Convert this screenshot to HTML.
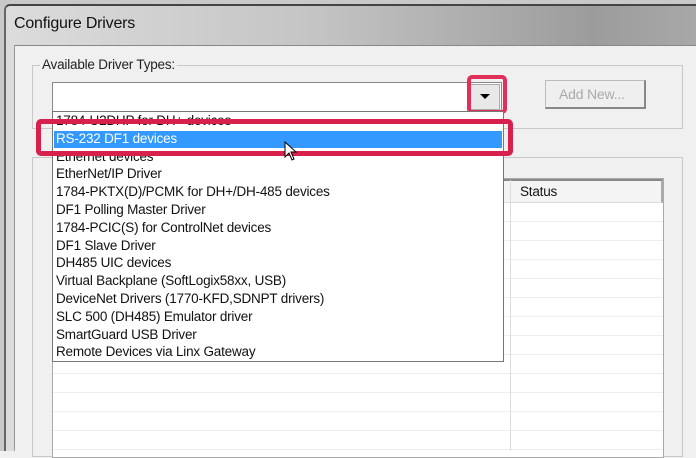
<!DOCTYPE html>
<html><head><style>
body{margin:0;width:696px;height:451px;overflow:hidden;background:#f0f0f0;font-family:"Liberation Sans",sans-serif;position:relative}
div{position:absolute;box-sizing:border-box}
.t{font-size:13.5px;color:#111;white-space:nowrap;letter-spacing:-0.2px}
</style></head><body>
<div style="left:0;top:0;width:696px;height:451px;background:#c9c9c9"></div>
<div style="left:4px;top:4px;width:692px;height:447px;background:linear-gradient(90deg,#dcdcdc,#c4c4c4 45%,#9c9c9c 85%,#a8a8a8);border-top:2px solid #444;border-left:2px solid #666;border-radius:6px 0 0 0"></div>
<div class="t" style="left:14px;top:15px;font-size:16px;color:#111">Configure Drivers</div>
<div style="left:14px;top:45px;width:682px;height:406px;background:#f0f0f0;border-top:1px solid #888;border-left:1px solid #999"></div>
<!-- group 1 -->
<div style="left:32px;top:65px;width:651px;height:64px;border:1px solid #c8c8c8"></div>
<div class="t" style="left:40px;top:57px;background:#f0f0f0;padding:0 2px;color:#222">Available Driver Types:</div>
<div style="left:52px;top:82px;width:450px;height:30px;background:#fff;border:1px solid #888;border-bottom:none"></div>
<div style="left:470px;top:84px;width:30px;height:26px;background:#e8e8e8;border:1px solid #aaa"></div>
<div style="left:480px;top:94px;width:0;height:0;border-left:5px solid transparent;border-right:5px solid transparent;border-top:5px solid #000"></div>
<div style="left:467px;top:75px;width:40px;height:39px;border:4px solid #e0305a;border-radius:5px"></div>
<div style="left:545px;top:80px;width:101px;height:29px;background:#efefef;border:1px solid #bbb;border-right:2px solid #888;border-bottom:2px solid #888"></div>
<div class="t" style="left:559px;top:86px;color:#aaa;font-size:14px">Add New...</div>
<!-- group 2 -->
<div style="left:32px;top:157px;width:651px;height:300px;border:1px solid #c8c8c8"></div>
<div style="left:52px;top:178px;width:612px;height:280px;background:#fff;border:1px solid #aaa;background-image:repeating-linear-gradient(180deg,#fff 0 18px,#eee 18px 19px);background-position:0 24px"></div>
<div style="left:53px;top:179px;width:610px;height:24px;background:#f4f4f4;border-top:2px solid #888;border-bottom:1px solid #ddd;border-right:2px solid #aaa"></div>
<div style="left:510px;top:180px;width:1px;height:271px;background:#ddd"></div>
<div class="t" style="left:520px;top:184px">Status</div>
<!-- dropdown list -->
<div style="left:52px;top:111px;width:452px;height:251px;background:#fff;border:1px solid #777"></div>
<div style="left:54px;top:131px;width:448px;height:17px;background:#3399ff"></div>
<div class="t" style="left:56px;top:112px;line-height:17.8px">
1784-U2DHP for DH+ devices<br><span style="color:#fff">RS-232 DF1 devices</span><br>Ethernet devices<br>EtherNet/IP Driver<br>1784-PKTX(D)/PCMK for DH+/DH-485 devices<br>DF1 Polling Master Driver<br>1784-PCIC(S) for ControlNet devices<br>DF1 Slave Driver<br>DH485 UIC devices<br>Virtual Backplane (SoftLogix58xx, USB)<br>DeviceNet Drivers (1770-KFD,SDNPT drivers)<br>SLC 500 (DH485) Emulator driver<br>SmartGuard USB Driver<br>Remote Devices via Linx Gateway</div>
<div style="left:36px;top:119px;width:477px;height:37px;border:5px solid #d8204c;border-radius:5px"></div>
<svg style="position:absolute;left:284px;top:141px" width="16" height="22"><path d="M1 1 L1 16 L5 12 L8 19 L10 18 L7 11 L12 11 Z" fill="#fff" stroke="#000" stroke-width="1"/></svg>
</body></html>
